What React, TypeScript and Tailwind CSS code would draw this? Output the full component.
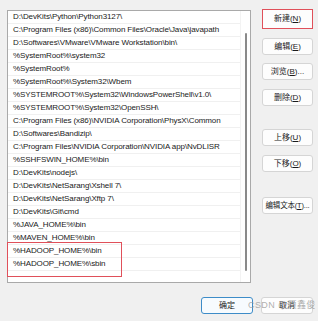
const paths = [
  'D:\\DevKits\\Python\\Python3127\\',
  'C:\\Program Files (x86)\\Common Files\\Oracle\\Java\\javapath',
  'D:\\Softwares\\VMware\\VMware Workstation\\bin\\',
  '%SystemRoot%\\system32',
  '%SystemRoot%',
  '%SystemRoot%\\System32\\Wbem',
  '%SYSTEMROOT%\\System32\\WindowsPowerShell\\v1.0\\',
  '%SYSTEMROOT%\\System32\\OpenSSH\\',
  'C:\\Program Files (x86)\\NVIDIA Corporation\\PhysX\\Common',
  'D:\\Softwares\\Bandizip\\',
  'C:\\Program Files\\NVIDIA Corporation\\NVIDIA app\\NvDLISR',
  '%SSHFSWIN_HOME%\\bin',
  'D:\\DevKits\\nodejs\\',
  'D:\\DevKits\\NetSarang\\Xshell 7\\',
  'D:\\DevKits\\NetSarang\\Xftp 7\\',
  'D:\\DevKits\\Git\\cmd',
  '%JAVA_HOME%\\bin',
  '%MAVEN_HOME%\\bin',
  '%HADOOP_HOME%\\bin',
  '%HADOOP_HOME%\\sbin',
]

function Row({ text }: { text: string }) {
  return (
    <div className="h-[13px] border-b border-[#f0f0f0] pl-[5px] leading-[12px] whitespace-nowrap overflow-hidden">
      {text}
    </div>
  )
}

function Btn({ label, keyChar, suffix = '', className = '' }: { label: string; keyChar: string; suffix?: string; className?: string }) {
  return (
    <div
      className={`flex h-[17px] w-[51px] items-center justify-center whitespace-nowrap rounded-[3px] border border-[#d5d5d5] bg-[#fdfdfd] text-[#1a1a1a] ${className}`}
    >
      {label}(<span className="underline">{keyChar}</span>){suffix}
    </div>
  )
}

export default function App() {
  return (
    <div
      className="relative h-[321px] w-[318px] overflow-hidden bg-[#f0f0f0] text-[#1a1a1a]"
      style={{ fontFamily: '"Liberation Sans", "Noto Sans CJK SC", sans-serif' }}
    >
      <div className="flex pl-[7px] pt-[10px]">
        {/* path list */}
        <div className="relative flex h-[273px] w-[244px] border border-[#a9a9a9] bg-white">
          <div className="w-[232px] text-[8px] tracking-[-0.1px]">
            {paths.map(p => (
              <Row key={p} text={p} />
            ))}
            <div className="h-[13px] border-b border-[#f0f0f0]" />
          </div>
          <div className="flex w-[10px] justify-center border-l border-[#f3f3f3] pt-[22px]">
            <div className="h-[238px] w-[2px] rounded-full bg-[#8a8a8a]" />
          </div>
          {/* highlight box drawn over the HADOOP rows */}
          <div className="absolute left-[-1px] top-[231px] h-[35px] w-[115px] border-[1.5px] border-[#e0505a]" />
        </div>

        {/* button column */}
        <div className="ml-[11px] flex flex-col">
          <div className="-mt-[1px] flex h-[20px] w-[51px] items-center justify-center border-[1.5px] border-[#e0505a] bg-[#fdfdfd] text-[8px]">
            新建(<span className="underline">N</span>)
          </div>
          <Btn label="编辑" keyChar="E" className="mt-[9px] text-[8px]" />
          <Btn label="浏览" keyChar="B" suffix="..." className="mt-[8px] text-[8px]" />
          <Btn label="删除" keyChar="D" className="mt-[9px] text-[8px]" />
          <Btn label="上移" keyChar="U" className="mt-[23px] text-[8px]" />
          <Btn label="下移" keyChar="O" className="mt-[9px] text-[8px]" />
          <Btn label="编辑文本" keyChar="T" suffix="..." className="mt-[25px] text-[7.5px] tracking-[-0.2px]" />
        </div>
      </div>

      {/* dialog buttons */}
      <div className="mt-[14px] flex justify-end gap-[8px] pr-[5px]">
        <div className="flex h-[17px] w-[52px] items-center justify-center rounded-[3px] border-[1.5px] border-[#3d8cc8] bg-[#f7fbfe] text-[8px]">
          确定
        </div>
        <div className="flex h-[17px] w-[52px] items-center justify-center rounded-[3px] border border-[#d5d5d5] bg-[#fdfdfd] text-[8px]">
          取消
        </div>
      </div>

      {/* watermark */}
      <div className="absolute left-[248px] top-[299px] text-[9px] tracking-[0.4px] text-[#9a9a9a]/80">
        CSDN @顾鑫俊
      </div>
    </div>
  )
}
